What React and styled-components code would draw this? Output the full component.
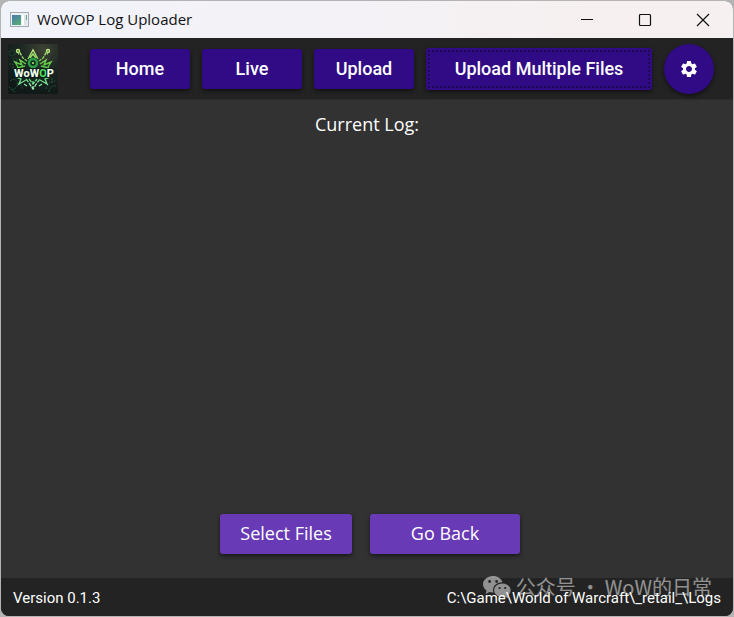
import React from "react";
import styled, { createGlobalStyle, css } from "styled-components";
import { MdSettings } from "react-icons/md";

const GlobalStyle = createGlobalStyle`
  * { box-sizing: border-box; }
  body { margin: 0; background: #b4b4b4; }
  button { font: inherit; cursor: pointer; }
`;

const Desktop = styled.div`
  min-height: 100vh;
  padding: 1px;
  display: flex;
`;

const Window = styled.div`
  position: relative;
  flex: 1;
  min-width: 0;
  display: flex;
  flex-direction: column;
  border-radius: 8px;
  overflow: hidden;
  background: #323232;
  color: #fff;
  font-family: "Open Sans", "Noto Sans", sans-serif;
`;

const TitleBar = styled.header`
  display: flex;
  align-items: center;
  height: 37px;
  padding: 0 1px 0 9px;
  background: linear-gradient(90deg, #f1f3fa 0%, #f4f2f6 50%, #f6f0f0 80%);
  color: #111;
`;

const WindowTitle = styled.h1`
  flex: 1;
  margin: 0 0 0 8px;
  padding-bottom: 2px;
  font-size: 15px;
  line-height: 20px;
  font-weight: 400;
`;

const CaptionButton = styled.button`
  width: 58px;
  height: 37px;
  padding: 0;
  display: grid;
  place-items: center;
  border: 0;
  background: transparent;
  color: #111;
`;

const NavBar = styled.nav`
  display: flex;
  align-items: center;
  height: 62px;
  padding: 0 19px 0 7px;
  gap: 12px;
  background: #232323;
  border-bottom: 1px solid #2a2a2a;
  font-family: Roboto, sans-serif;
`;

const LogoSlot = styled.div`
  flex: none;
  width: 70px;
  height: 50px;
`;

const raised = css`
  border: 0;
  border-radius: 3px;
  color: #fff;
  box-shadow: 0 2px 4px rgba(0, 0, 0, 0.55);
`;

const NavButton = styled.button`
  ${raised}
  flex: ${(p) => (p.$wide ? "226 1 0" : "100 1 0")};
  height: ${(p) => (p.$wide ? 42 : 40)}px;
  padding: 0;
  background: #310b85;
  font-size: 18px;
  line-height: 24px;
  font-weight: 500;
  white-space: nowrap;
  outline: ${(p) => (p.$wide ? "2px dotted #1d0a50" : "none")};
  outline-offset: -4px;
`;

const SettingsButton = styled.button`
  ${raised}
  flex: none;
  width: 50px;
  height: 50px;
  padding: 0;
  display: grid;
  place-items: center;
  border-radius: 50%;
  background: #310b85;
`;

const Content = styled.main`
  flex: 1;
  display: flex;
  flex-direction: column;
  align-items: center;
  justify-content: space-between;
  padding: 11px 12px 24px;
`;

const LogHeading = styled.h2`
  margin: 0;
  font-size: 18px;
  line-height: 26px;
  font-weight: 400;
`;

const Actions = styled.div`
  display: flex;
  gap: 18px;
  padding-left: 6px;
`;

const ActionButton = styled.button`
  ${raised}
  width: ${(p) => p.$width}px;
  height: 40px;
  padding: 0 0 2px;
  background: #693ab5;
  font-size: 18px;
  line-height: 26px;
`;

const StatusBar = styled.footer`
  display: flex;
  justify-content: space-between;
  align-items: center;
  height: 38px;
  padding: 2px 12px 0;
  background: #232323;
  font-family: Roboto, sans-serif;
  font-size: 15px;
  line-height: 20px;
`;

const Watermark = styled.div`
  position: absolute;
  right: 21px;
  bottom: 14px;
  display: flex;
  align-items: center;
  gap: 5px;
  color: #fff;
  opacity: 0.5;
  font-family: "Noto Sans CJK SC", sans-serif;
  font-size: 20px;
  line-height: 30px;
  font-weight: 400;
  white-space: nowrap;
  pointer-events: none;
`;

function AppIcon() {
  return (
    <svg width="19" height="15" viewBox="0 0 19 15" aria-hidden="true">
      <defs>
        <linearGradient id="pane" x1="0" y1="0" x2="0.6" y2="1">
          <stop offset="0" stopColor="#4678ae" />
          <stop offset="1" stopColor="#57a878" />
        </linearGradient>
      </defs>
      <rect x="0.5" y="0.5" width="18" height="14" fill="#eef1f3" stroke="#a3a9b0" />
      <rect x="2" y="3" width="9" height="10" fill="url(#pane)" />
      <rect x="12" y="3" width="2" height="10" fill="#fff" />
      <rect x="14" y="3" width="3" height="10" fill="#dce4e6" />
      <rect x="16" y="3" width="1" height="5" fill="#6aa98c" />
    </svg>
  );
}

function Logo() {
  return (
    <svg width="50" height="50" viewBox="0 0 50 50" role="img" aria-label="WoWOP">
      <defs>
        <radialGradient id="glow" cx="0.7" cy="0.1" r="0.9">
          <stop offset="0" stopColor="#3d4234" />
          <stop offset="0.5" stopColor="#1c2723" />
          <stop offset="1" stopColor="#101917" />
        </radialGradient>
        <linearGradient id="leaf" gradientUnits="userSpaceOnUse" x1="0" y1="5" x2="0" y2="46">
          <stop offset="0" stopColor="#c9ec86" />
          <stop offset="0.4" stopColor="#56c93f" />
          <stop offset="0.7" stopColor="#56cf70" />
          <stop offset="1" stopColor="#a8edc0" />
        </linearGradient>
      </defs>
      <rect width="50" height="50" fill="url(#glow)" />
      <g fill="none" stroke="#22543d" strokeWidth="1" strokeDasharray="2 1">
        <circle cx="4" cy="9" r="3" />
        <circle cx="7" cy="16" r="2" />
        <path d="M1 20h4v5M2 37q5-4 7 1t-5 8M9 40q6 0 5 6M1 43l6 5M38 45q2-8 9-8M41 48q0-6 7-6M44 39v-5" />
      </g>
      <g fill="none" stroke="url(#leaf)" strokeWidth="1.4" strokeLinejoin="miter">
        <path d="M20 15l5-9 5 9M22 14l3-4 3 4" />
        <path d="M19 17l-4-3-3-5-2 1M31 17l4-3 3-5 2 1" strokeDasharray="3 1" />
        <path d="M18 20l-6-4 2 5-7-3 3 5M32 20l6-4-2 5 7-3-3 5" />
        <path d="M9 24l8-2M41 24l-8-2" />
        <path d="M8 33l5 2-2 5 7-4M42 33l-5 2 2 5-7-4" />
        <path d="M18 35l3 4 4 6 4-6 3-4M21 35l4 5 4-5M25 37v7" strokeDasharray="4 1" />
        <path d="M16 40l3 2M34 40l-3 2" />
        <circle cx="10" cy="7" r="1.500" />
        <circle cx="40" cy="7" r="1.500" />
      </g>
      <circle cx="25" cy="19" r="4" fill="#12301c" stroke="#299e46" strokeWidth="2.500" />
      <circle cx="25" cy="19" r="1" fill="#b8ef6e" />
      <text
        x="26"
        y="33"
        textAnchor="middle"
        fontFamily="Roboto, sans-serif"
        fontSize="11"
        fontWeight="800"
        fill="#eefff0"
        stroke="#0f1b15"
        strokeWidth="2"
        paintOrder="stroke"
      >
        WoW<tspan fill="#4ddd62">O</tspan>P
      </text>
    </svg>
  );
}

function CaptionIcon({ d }) {
  return (
    <svg width="14" height="14" viewBox="0 0 14 14" fill="none" stroke="currentColor" strokeWidth="1.2" aria-hidden="true">
      <path d={d} />
    </svg>
  );
}

function ChatBubbles() {
  return (
    <svg width="28" height="24" viewBox="0 0 28 24" aria-hidden="true">
      <path
        fill="#fff"
        fillRule="evenodd"
        d="M10 1C4.500 1 0 4.700 0 9.300c0 2.600 1.400 4.800 3.600 6.300L2.700 19l3.700-2c1.200.3 2.600.5 4 .4-.3-.8-.4-1.600-.4-2.400 0-4.400 4.200-7.800 9.500-7.700C18.400 3.600 14.600 1 10 1ZM6.600 5.100a1.400 1.400 0 1 1 0 2.800 1.400 1.400 0 0 1 0-2.800Zm7 0a1.400 1.400 0 1 1 0 2.800 1.400 1.400 0 0 1 0-2.800Z"
      />
      <path
        fill="#fff"
        fillRule="evenodd"
        d="M19.400 8.500c-4.700 0-8.300 3-8.300 6.800s3.600 6.800 8.300 6.800c1 0 2-.1 2.900-.4l3 1.700-.8-2.800c1.900-1.200 3.100-3.100 3.100-5.300 0-3.800-3.600-6.800-8.200-6.800Zm-2.800 3.400a1.100 1.100 0 1 1 0 2.200 1.100 1.100 0 0 1 0-2.200Zm5.600 0a1.100 1.100 0 1 1 0 2.200 1.100 1.100 0 0 1 0-2.200Z"
      />
    </svg>
  );
}

export default function App() {
  return (
    <>
      <GlobalStyle />
      <Desktop>
        <Window>
          <TitleBar>
            <AppIcon />
            <WindowTitle>WoWOP Log Uploader</WindowTitle>
            <CaptionButton aria-label="Minimize">
              <CaptionIcon d="M1 6.500h12" />
            </CaptionButton>
            <CaptionButton aria-label="Maximize">
              <CaptionIcon d="M2.500 1.500h9a1 1 0 0 1 1 1v9a1 1 0 0 1-1 1h-9a1 1 0 0 1-1-1v-9a1 1 0 0 1 1-1Z" />
            </CaptionButton>
            <CaptionButton aria-label="Close">
              <CaptionIcon d="M1 1l12 12M13 1L1 13" />
            </CaptionButton>
          </TitleBar>
          <NavBar>
            <LogoSlot>
              <Logo />
            </LogoSlot>
            <NavButton>Home</NavButton>
            <NavButton>Live</NavButton>
            <NavButton>Upload</NavButton>
            <NavButton $wide>Upload Multiple Files</NavButton>
            <SettingsButton aria-label="Settings">
              <MdSettings size={20} />
            </SettingsButton>
          </NavBar>
          <Content>
            <LogHeading>Current Log:</LogHeading>
            <Actions>
              <ActionButton $width={132}>Select Files</ActionButton>
              <ActionButton $width={150}>Go Back</ActionButton>
            </Actions>
          </Content>
          <StatusBar>
            <span>Version 0.1.3</span>
            <span>C:\Game\World of Warcraft\_retail_\Logs</span>
          </StatusBar>
          <Watermark>
            <ChatBubbles />
            <span>公众号 · WoW的日常</span>
          </Watermark>
        </Window>
      </Desktop>
    </>
  );
}
